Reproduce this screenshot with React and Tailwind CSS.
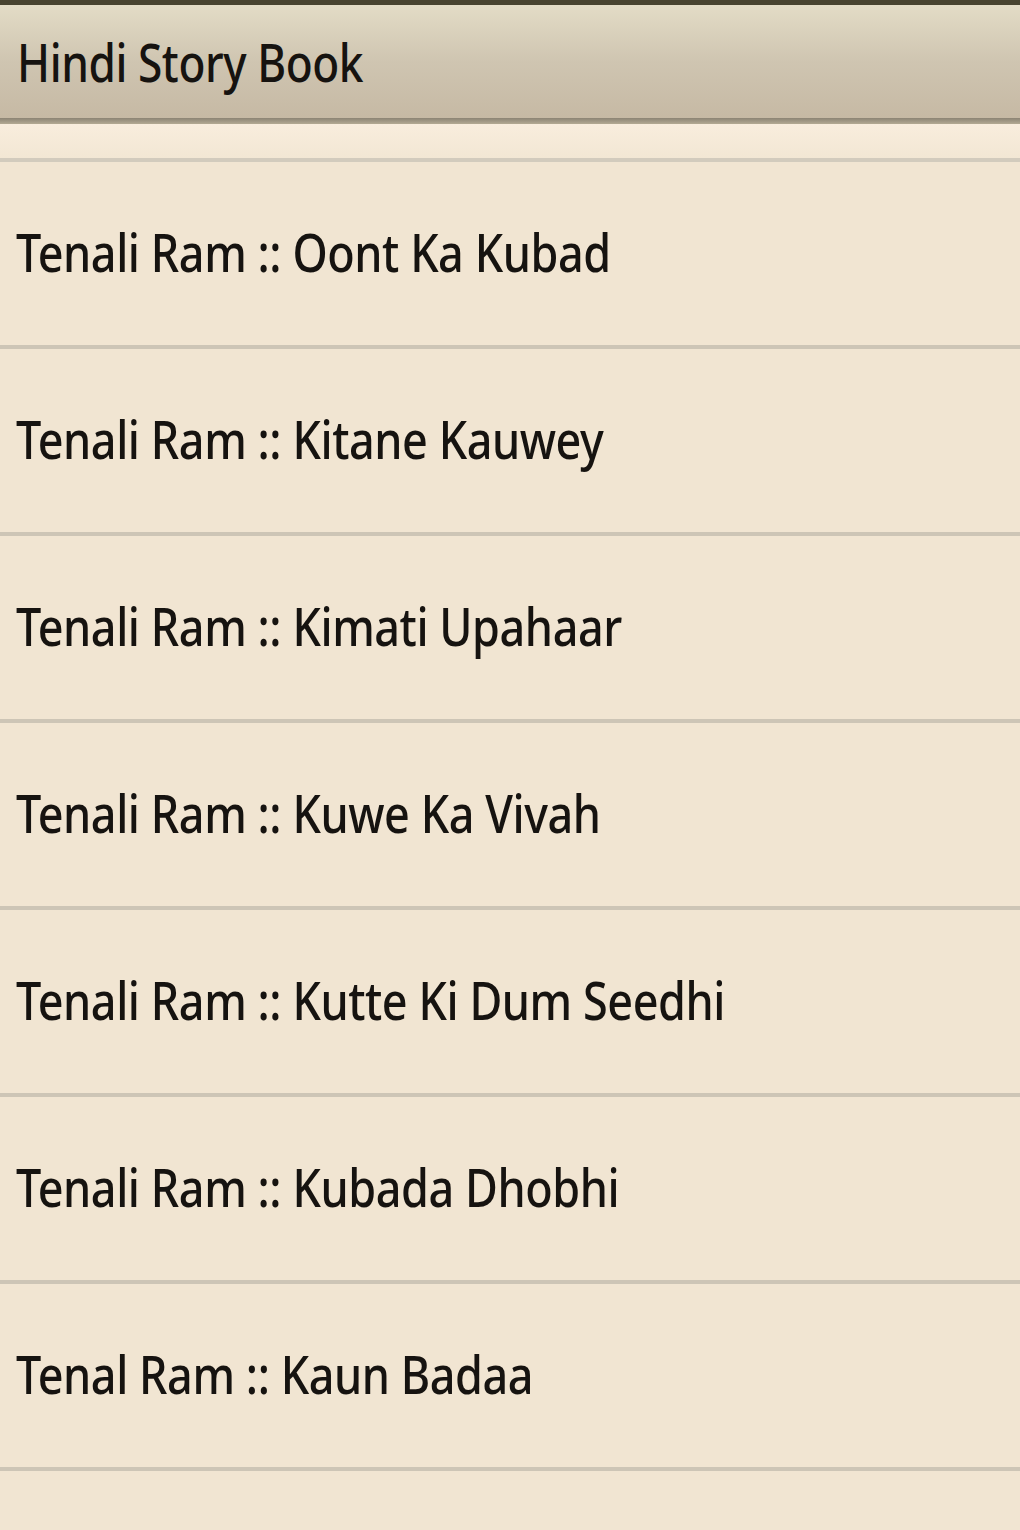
import React from "react";

const stories = [
  "Tenali Ram :: Oont Ka Kubad",
  "Tenali Ram :: Kitane Kauwey",
  "Tenali Ram :: Kimati Upahaar",
  "Tenali Ram :: Kuwe Ka Vivah",
  "Tenali Ram :: Kutte Ki Dum Seedhi",
  "Tenali Ram :: Kubada Dhobhi",
  "Tenal Ram :: Kaun Badaa",
];

const App = () => {
  return (
    <div
      className="w-[1020px] h-[1530px] overflow-hidden bg-[#f1e5d2] text-[#161310]"
      style={{ fontFamily: '"Noto Sans", "Open Sans", sans-serif' }}
    >
      {/* title bar */}
      <div className="h-[5px] bg-[#48432f]" />
      <div className="h-[113px] flex items-center px-[17px] bg-gradient-to-b from-[#e3dcc6] via-[#cfc5b1] to-[#c6b9a4]">
        <h1 className="text-[52px] leading-none font-medium tracking-[-0.5px] whitespace-nowrap origin-left scale-x-[0.85]">
          Hindi Story Book
        </h1>
      </div>
      <div className="h-[6px] bg-gradient-to-b from-[#8c8474] to-[#b3a993]" />

      {/* list */}
      <div className="h-[34px] bg-gradient-to-b from-[#f9eddd] to-[#f2e7d4]" />
      <div className="h-[4px] bg-[#d2cbbd]" />
      <ul>
        {stories.map((title) => (
          <li key={title} className="flex flex-col">
            <div className="h-[183px] flex items-center px-[16px]">
              <span className="text-[52px] leading-none font-medium tracking-[-0.5px] pb-[4px] whitespace-nowrap origin-left scale-x-[0.865]">
                {title}
              </span>
            </div>
            <div className="h-[4px] bg-[#cdc5b6]" />
          </li>
        ))}
      </ul>
    </div>
  );
};

export default App;
